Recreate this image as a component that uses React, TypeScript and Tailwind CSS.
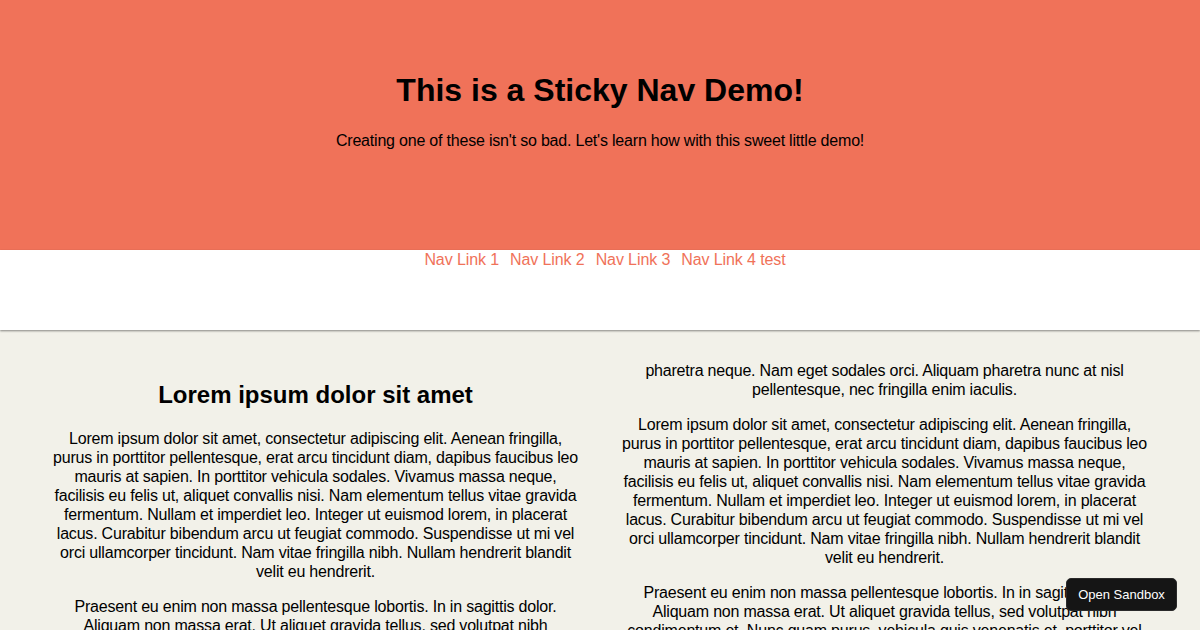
const p1 =
  "Lorem ipsum dolor sit amet, consectetur adipiscing elit. Aenean fringilla, purus in porttitor pellentesque, erat arcu tincidunt diam, dapibus faucibus leo mauris at sapien. In porttitor vehicula sodales. Vivamus massa neque, facilisis eu felis ut, aliquet convallis nisi. Nam elementum tellus vitae gravida fermentum. Nullam et imperdiet leo. Integer ut euismod lorem, in placerat lacus. Curabitur bibendum arcu ut feugiat commodo. Suspendisse ut mi vel orci ullamcorper tincidunt. Nam vitae fringilla nibh. Nullam hendrerit blandit velit eu hendrerit.";

const p2a =
  "Praesent eu enim non massa pellentesque lobortis. In in sagittis dolor. Aliquam non massa erat. Ut aliquet gravida tellus, sed volutpat nibh condimentum et. Nunc quam purus, vehicula quis venenatis et, porttitor vel velit. Curabitur sit amet lectus in lorem finibus dictum vel non neque. Vestibulum ante ipsum primis in faucibus orci luctus et ultrices posuere cubilia curae; Donec vel lacus nec nisi suscipit tempor. Morbi nec ultricies urna, vitae";
const p2b = "pharetra neque. Nam eget sodales orci. Aliquam pharetra nunc at nisl pellentesque, nec fringilla enim iaculis.";

const links = ["Nav Link 1", "Nav Link 2", "Nav Link 3", "Nav Link 4 test"];

function P2() {
  return (
    <p className="mb-4">
      {p2a}
      <br />
      {p2b}
    </p>
  );
}

export default function App() {
  return (
    <div className="min-h-screen bg-[#f2f1e9] font-['Liberation_Sans',Arial,sans-serif] text-black">
      <header className="flex h-[250px] flex-col items-center bg-[#f07259] pt-[51px] text-center">
        <h1 className="mt-[21px] mb-[22px] text-[32px] font-bold leading-[37px]">This is a Sticky Nav Demo!</h1>
        <p className="text-base leading-[19px] tracking-[-0.2px]">
          Creating one of these isn't so bad. Let's learn how with this sweet little demo!
        </p>
      </header>

      <nav className="sticky top-0 z-10 h-[80px] bg-white shadow-[0_1px_2px_rgba(0,0,0,0.45)]">
        <ul className="flex justify-center gap-[11px] pt-px pl-[10px] text-base leading-[18px] tracking-[-0.1px]">
          {links.map((l) => (
            <li key={l}>
              <a href="#" className="text-[#f07259]">
                {l}
              </a>
            </li>
          ))}
        </ul>
      </nav>

      <main className="columns-2 gap-[34px] px-[48px] pt-[31px] text-center text-base leading-[19px] tracking-[-0.2px]">
        <h2 className="my-[20px] text-[24px] font-bold leading-[28px] tracking-normal">Lorem ipsum dolor sit amet</h2>
        <p className="mb-4">{p1}</p>
        <P2 />
        <p className="mb-4">{p1}</p>
        <P2 />
      </main>

      <button className="fixed right-[23px] bottom-[19px] z-20 h-[33px] w-[111px] rounded-[5px] border border-[#2a2a2a] bg-[#151515] text-[13px] text-white">
        Open Sandbox
      </button>
    </div>
  );
}
